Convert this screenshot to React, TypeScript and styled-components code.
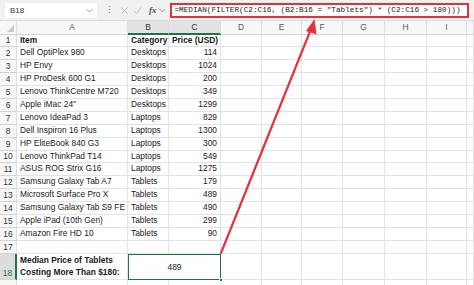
import * as React from "react";
import styled, { createGlobalStyle, css } from "styled-components";

const GlobalStyle = createGlobalStyle`
    html, body {
        margin: 0;
        padding: 0;
        background: #fff;
        overflow: hidden;
    }
    body {
        font-family: "Liberation Sans", Arial, sans-serif;
        color: #1e1e1e;
    }
`;

const COLS = "17px 111px 41px 52px 41px 40px 41px 42px 42px 40px 1fr";
const SELECTED_COLS = ["B", "C"];
const HEADERS = ["A", "B", "C", "D", "E", "F", "G", "H", "I", ""];
const EMPTY_COLS = 7;

type Item = [string, string, string];

const items: Item[] = [
    ["Dell OptiPlex 980", "Desktops", "114"],
    ["HP Envy", "Desktops", "1024"],
    ["HP ProDesk 600 G1", "Desktops", "200"],
    ["Lenovo ThinkCentre M720", "Desktops", "349"],
    ["Apple iMac 24\"", "Desktops", "1299"],
    ["Lenovo IdeaPad 3", "Laptops", "829"],
    ["Dell Inspiron 16 Plus", "Laptops", "1300"],
    ["HP EliteBook 840 G3", "Laptops", "300"],
    ["Lenovo ThinkPad T14", "Laptops", "549"],
    ["ASUS ROG Strix G16", "Laptops", "1275"],
    ["Samsung Galaxy Tab A7", "Tablets", "179"],
    ["Microsoft Surface Pro X", "Tablets", "489"],
    ["Samsung Galaxy Tab S9 FE", "Tablets", "490"],
    ["Apple iPad (10th Gen)", "Tablets", "299"],
    ["Amazon Fire HD 10", "Tablets", "90"],
];

const EmptyCells: React.FC = () => (
    <>
        {Array.from({ length: EMPTY_COLS }).map((_, i) => (
            <Cell key={i} />
        ))}
    </>
);

const App: React.FC = () => {
    return (
        <>
            <GlobalStyle />
            <Page>
                <FormulaBar>
                    <NameBox>
                        <span>B18</span>
                        <Chevron viewBox="0 0 8 5">
                            <path d="M1 1l3 3 3-3" />
                        </Chevron>
                    </NameBox>
                    <Dots>⋮</Dots>
                    <BarIcon viewBox="0 0 10 10">
                        <path d="M1.5 1.5l7 7M8.5 1.5l-7 7" />
                    </BarIcon>
                    <BarIcon viewBox="0 0 10 10">
                        <path d="M1 5.5l3 3 5-7" />
                    </BarIcon>
                    <Fx>fx</Fx>
                    <Chevron viewBox="0 0 8 5">
                        <path d="M1 1l3 3 3-3" />
                    </Chevron>
                    <FormulaInput>
                        =MEDIAN(FILTER(C2:C16, (B2:B16 = "Tablets") * (C2:C16 &gt; 180)))
                    </FormulaInput>
                </FormulaBar>

                <Sheet>
                    <Row $height={13.5}>
                        <Corner>
                            <svg width="7" height="7" viewBox="0 0 7 7">
                                <path d="M7 0V7H0z" fill="#c8c8c8" />
                            </svg>
                        </Corner>
                        {HEADERS.map((h, i) => (
                            <ColHead key={i} $selected={SELECTED_COLS.includes(h)}>
                                {h}
                            </ColHead>
                        ))}
                    </Row>

                    <Row $height={12.9}>
                        <RowHead>1</RowHead>
                        <Cell $bold>Item</Cell>
                        <Cell $bold>Category</Cell>
                        <Cell $bold>Price (USD)</Cell>
                        <EmptyCells />
                    </Row>

                    {items.map((it, i) => (
                        <Row key={i} $height={12.9}>
                            <RowHead>{i + 2}</RowHead>
                            <Cell>{it[0]}</Cell>
                            <Cell>{it[1]}</Cell>
                            <Cell $right>{it[2]}</Cell>
                            <EmptyCells />
                        </Row>
                    ))}

                    <Row $height={12.9}>
                        <RowHead>17</RowHead>
                        <Cell />
                        <Cell />
                        <Cell />
                        <EmptyCells />
                    </Row>

                    <Row $height={26}>
                        <RowHead $selected>18</RowHead>
                        <Cell $bold $wrap>
                            Median Price of Tablets
                            <br />
                            Costing More Than $180:
                        </Cell>
                        <ResultCell>489</ResultCell>
                        <EmptyCells />
                    </Row>

                    <Row $height={12.9}>
                        <RowHead />
                        <Cell />
                        <Cell />
                        <Cell />
                        <EmptyCells />
                    </Row>
                </Sheet>

                <Arrow width="474" height="285" viewBox="0 0 474 285">
                    <line x1="221" y1="253" x2="311" y2="29" />
                    <polygon points="314.5,19 306,31 316.5,34.5" />
                </Arrow>
            </Page>
        </>
    );
};

const Page = styled.div`
    position: relative;
    width: 474px;
    height: 285px;
    overflow: hidden;
    background: #fff;
`;

const FormulaBar = styled.div`
    display: flex;
    align-items: center;
    height: 21px;
    padding: 0 5px 0 5px;
    box-sizing: border-box;
    background: #f1f1f1;
    border-bottom: 1px solid #dcdcdc;
    color: #9a9a9a;
`;

const NameBox = styled.div`
    display: flex;
    align-items: center;
    justify-content: space-between;
    width: 92px;
    height: 15px;
    box-sizing: border-box;
    padding: 0 4px 0 5px;
    background: #fff;
    border-radius: 2px;
    font-size: 8px;
    color: #333;
`;

const Chevron = styled.svg`
    width: 7px;
    height: 5px;
    fill: none;
    stroke: #8a8a8a;
    stroke-width: 1;
`;

const Dots = styled.span`
    font-size: 9px;
    color: #777;
    margin: 0 6px 0 8px;
`;

const BarIcon = styled.svg`
    width: 9px;
    height: 9px;
    margin-right: 4px;
    fill: none;
    stroke: #b4b4b4;
    stroke-width: 0.9;
`;

const Fx = styled.span`
    font-family: "Liberation Serif", serif;
    font-style: italic;
    font-weight: bold;
    font-size: 9px;
    color: #555;
    margin: 0 2px 0 3px;
`;

const FormulaInput = styled.div`
    flex: 1;
    height: 15px;
    margin-left: 4px;
    box-sizing: border-box;
    border: 2px solid #e0323c;
    background: #fff;
    font-family: "Liberation Mono", "DejaVu Sans Mono", monospace;
    font-size: 7.7px;
    line-height: 11px;
    padding-left: 3px;
    color: #222;
    white-space: nowrap;
    overflow: hidden;
`;

const Sheet = styled.div`
    display: flex;
    flex-direction: column;
`;

const Row = styled.div<{ $height: number }>`
    display: grid;
    grid-template-columns: ${COLS};
    height: ${(p) => p.$height}px;
    flex-shrink: 0;
`;

const headBase = css`
    box-sizing: border-box;
    background: #f7f7f7;
    border-right: 1px solid #dedede;
    border-bottom: 1px solid #d4d4d4;
    color: #555;
    font-size: 8.4px;
`;

const Corner = styled.div`
    ${headBase};
    display: flex;
    align-items: flex-end;
    justify-content: flex-end;
    padding: 0 2px 2px 0;
`;

const ColHead = styled.div<{ $selected?: boolean }>`
    ${headBase};
    display: flex;
    align-items: center;
    justify-content: center;
    ${(p) =>
        p.$selected &&
        css`
            background: #e2e2e2;
            border-bottom: 2px solid #217346;
            color: #333;
        `}
`;

const RowHead = styled.div<{ $selected?: boolean }>`
    ${headBase};
    display: flex;
    align-items: flex-end;
    justify-content: center;
    padding-bottom: 1px;
    color: #333;
    ${(p) =>
        p.$selected &&
        css`
            background: #dcdcdc;
            border-right: 2px solid #217346;
            color: #217346;
        `}
`;

const Cell = styled.div<{ $bold?: boolean; $right?: boolean; $wrap?: boolean }>`
    box-sizing: border-box;
    border-right: 1px solid #e3e3e3;
    border-bottom: 1px solid #e3e3e3;
    font-size: 8.4px;
    line-height: 11.5px;
    padding: 0 3px 0 3px;
    white-space: nowrap;
    overflow: visible;
    font-weight: ${(p) => (p.$bold ? "bold" : "normal")};
    text-align: ${(p) => (p.$right ? "right" : "left")};
    color: #1a1a1a;
    ${(p) =>
        p.$wrap &&
        css`
            line-height: 12.3px;
            padding-top: 0.5px;
        `}
`;

const ResultCell = styled.div`
    position: relative;
    grid-column: span 2;
    box-sizing: border-box;
    border: 1.5px solid #217346;
    display: flex;
    align-items: center;
    justify-content: center;
    font-size: 8.5px;
    color: #1a1a1a;
    &::after {
        content: "";
        position: absolute;
        right: -3px;
        bottom: -3px;
        width: 4px;
        height: 4px;
        background: #217346;
        border: 1px solid #fff;
        box-sizing: border-box;
    }
`;

const Arrow = styled.svg`
    position: absolute;
    left: 0;
    top: 0;
    pointer-events: none;
    line {
        stroke: #e5333a;
        stroke-width: 2.2;
        stroke-linecap: round;
    }
    polygon {
        fill: #e5333a;
    }
`;

export default App;
